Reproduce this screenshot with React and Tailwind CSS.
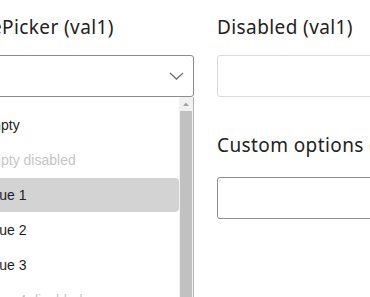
import React from 'react'

const labelFont = { fontFamily: '"Noto Sans", "Open Sans", sans-serif' }

const options = [
  { label: 'Empty' },
  { label: 'Empty disabled', disabled: true },
  { label: 'Value 1', selected: true },
  { label: 'Value 2' },
  { label: 'Value 3' },
  { label: 'Value 4 disabled', disabled: true },
]

const App = () => {
  return (
    <div className="w-[370px] h-[297px] overflow-hidden bg-white relative">
      <div className="flex gap-[23px] ml-[-44px] pt-[14px] text-[#222]">
        {/* left column: picker with open list */}
        <div className="w-[238px] shrink-0 relative">
          <p className="ml-[-5px] text-[19px] tracking-[0.4px] leading-[27px] mb-[14px] whitespace-nowrap" style={labelFont}>ValuePicker (val1)</p>
          <div className="h-[42px] border border-[#8d8d8d] rounded-[3px] flex items-center justify-end pr-[9px]">
            <svg width="15" height="8" viewBox="0 0 15 8" fill="none">
              <path d="M1 1l6.5 6L14 1" stroke="#707070" strokeWidth="1.3" />
            </svg>
          </div>
          <div className="absolute left-0 top-[83px] w-full h-[230px] bg-white border-r border-[#b5b5b5] flex">
            <div className="flex-1 pt-[11px]">
              {options.map((o) => (
                <div
                  key={o.label}
                  className={
                    'h-[34px] mb-px pl-[24px] flex items-center text-[14px] rounded-r-[4px] whitespace-nowrap ' +
                    (o.selected ? 'bg-[#d3d3d3] ' : '') +
                    (o.disabled ? 'text-[#c6c6c6]' : 'text-[#1e1e1e]')
                  }
                  style={{ fontFamily: '"Liberation Sans", Arial, sans-serif' }}
                >
                  {o.label}
                </div>
              ))}
            </div>
            <div className="w-[14px] bg-[#f1f1f1] flex flex-col items-center">
              <div className="h-[14px] flex items-center justify-center">
                <svg width="6" height="4" viewBox="0 0 6 4">
                  <path d="M0 4L3 0.5 6 4z" fill="#a3a3a3" />
                </svg>
              </div>
              <div className="w-[12px] flex-1 bg-[#c1c1c1]" />
            </div>
          </div>
        </div>

        {/* right column */}
        <div className="w-[238px] shrink-0" style={labelFont}>
          <p className="text-[19px] tracking-[0.4px] leading-[27px] mb-[14px] whitespace-nowrap">Disabled (val1)</p>
          <div className="h-[42px] border border-[#dadada] rounded-[3px]" />
          <p className="text-[19px] tracking-[0.4px] leading-[27px] mt-[35px] mb-[18px] whitespace-nowrap">Custom options (val1)</p>
          <div className="h-[42px] border border-[#8d8d8d] rounded-[3px]" />
        </div>
      </div>
    </div>
  )
}

export default App
